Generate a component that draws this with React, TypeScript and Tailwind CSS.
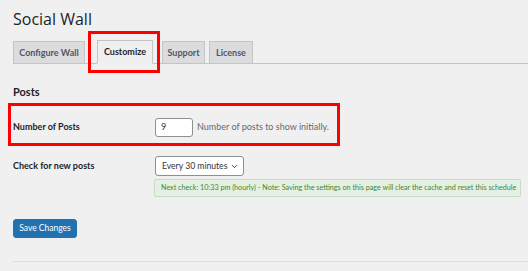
import { ChevronDown } from "lucide-react";

const tabs = [
  { label: "Configure Wall", w: "w-[72px]", ml: "ml-0", active: false },
  { label: "Customize", w: "w-[56px]", ml: "ml-[12px]", active: true },
  { label: "Support", w: "w-[43px]", ml: "ml-[9px]", active: false },
  { label: "License", w: "w-[44px]", ml: "ml-[4px]", active: false },
];

export default function App() {
  return (
    <div
      className="relative w-[528px] h-[271px] overflow-hidden bg-[#f0f0f1] pl-[13px] text-[#1d2327] whitespace-nowrap"
      style={{ fontFamily: 'Lato, "Open Sans", sans-serif' }}
    >
      {/* Title */}
      <h1
        className="pt-[9px] text-[16px] leading-[20px] font-normal text-[#1d2327]"
        style={{ fontFamily: '"Open Sans", sans-serif' }}
      >
        Social Wall
      </h1>

      {/* Tabs */}
      <div className="relative mt-[11px] flex items-end h-[24px] border-b border-[#c3c4c7]">
        {tabs.map((t) => (
          <div
            key={t.label}
            className={
              t.active
                ? `${t.w} ${t.ml} -mb-px h-[24px] flex items-center justify-center border border-[#c3c4c7] border-b-[#f0f0f1] bg-[#f0f0f1] text-[9px] font-bold text-[#1d2327]`
                : `${t.w} ${t.ml} -mb-px h-[23px] flex items-center justify-center border border-[#c3c4c7] bg-[#dcdcde] text-[9px] font-bold text-[#50575e]`
            }
          >
            {t.label}
          </div>
        ))}
        {/* annotation box */}
        <div className="absolute left-[75px] top-[-9px] w-[72px] h-[42px] border-[3px] border-[#ff0000]" />
      </div>

      {/* Section heading */}
      <h2 className="mt-[20px] text-[11px] leading-[16px] font-bold text-[#1d2327]">Posts</h2>

      {/* Settings rows */}
      <div className="relative mt-[17px] flex flex-col">
        <div className="flex items-center h-[20px]">
          <div className="w-[142px] text-[9px] font-bold text-[#1d2327]">Number of Posts</div>
          <div className="w-[38px] h-[19px] rounded-[3px] border border-[#8c8f94] bg-white pl-[5px] flex items-center text-[9px] text-[#2c3338]">
            9
          </div>
          <span className="ml-[4px] text-[9px] text-[#646970]">Number of posts to show initially.</span>
        </div>
        {/* annotation box */}
        <div className="absolute left-[-5px] top-[-14px] w-[332px] h-[43px] border-[3px] border-[#ff0000]" />

        <div className="mt-[19px] flex items-start">
          <div className="w-[142px] pt-[3px] text-[9px] font-bold text-[#1d2327]">Check for new posts</div>
          <div className="flex flex-col">
            <div className="w-[89px] h-[20px] rounded-[3px] border border-[#8c8f94] bg-white pl-[6px] pr-[4px] flex items-center justify-between text-[8.6px] text-[#2c3338]">
              <span>Every 30 minutes</span>
              <ChevronDown className="w-[9px] h-[9px] text-[#2c3338]" strokeWidth={2.5} />
            </div>
            <div className="mt-[3px] -ml-[1px] w-[367px] h-[18px] rounded-[2px] border border-[#c6dcc4] bg-[#e6efe3] pl-[6px] flex items-center text-[7.2px] text-[#3a8a35]">
              Next check: 10:33 pm (hourly) - Note: Saving the settings on this page will clear the cache and reset this schedule
            </div>
          </div>
        </div>
      </div>

      {/* Save */}
      <button className="mt-[22px] w-[64px] h-[19px] rounded-[3px] border border-[#2271b1] bg-[#2271b1] text-[8.5px] text-white">
        Save Changes
      </button>

      <div className="mt-[23px] h-px bg-[#dcdcde]" />
    </div>
  );
}
